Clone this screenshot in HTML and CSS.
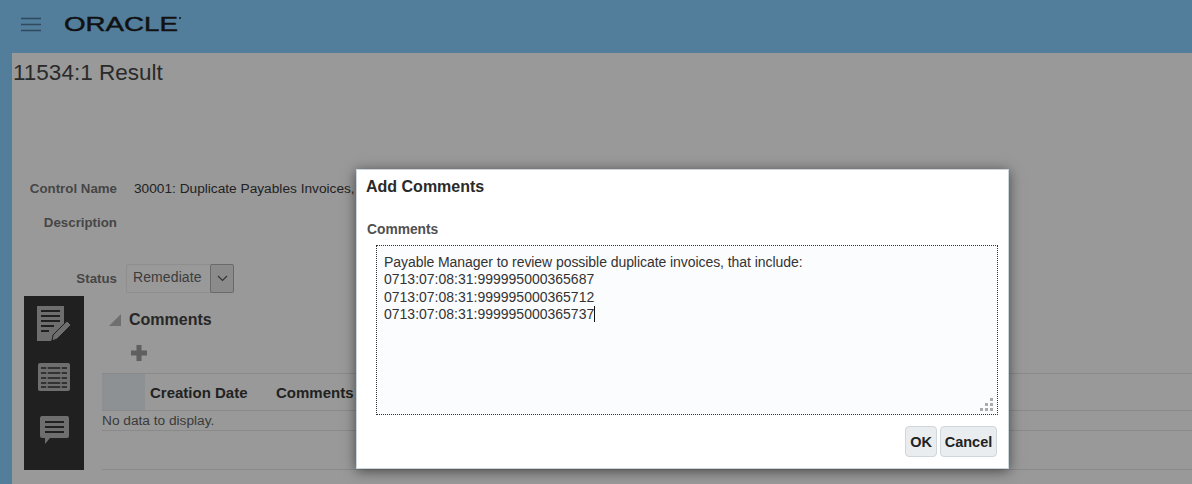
FILE: index.html
```html
<!DOCTYPE html>
<html lang="en">
<head>
<meta charset="utf-8">
<title>11534:1 Result</title>
<link rel="stylesheet" href="styles.css">
</head>
<body>
<div class="page">
  <header class="topbar">
    <svg class="burger" width="21" height="15" viewBox="0 0 21 15"><path d="M0 1.5h20M0 7.5h20M0 13.5h20" stroke="#2f4a5c" stroke-width="1.6" fill="none"/></svg>
    <svg class="logo" width="122" height="22" viewBox="0 0 122 22"><text x="0" y="18" textLength="114" lengthAdjust="spacingAndGlyphs" class="logo-text">ORACLE</text><circle cx="116" cy="5" r="1" fill="#111"/></svg>
  </header>
  <main class="content">
    <h1 class="title">11534:1 Result</h1>
    <div class="form">
      <div class="label">Control Name</div><div class="value">30001: Duplicate Payables Invoices,</div>
      <div class="label">Description</div><div class="value"></div>
      <div class="label status-label">Status</div>
      <div class="select"><span class="select-text">Remediate</span><span class="select-btn"><svg width="11" height="7" viewBox="0 0 11 7"><path d="M1 1l4.500 4.500L10 1" stroke="#333" stroke-width="1.200" fill="none"/></svg></span></div>
    </div>
    <section class="lower">
      <nav class="rail">
        <svg class="rail-note" width="36" height="36" viewBox="0 0 36 36"><path d="M1 0h27v19L17 32l-2 3H1z" fill="#6e6e6e"/><path d="M5 5h19M5 10h19M5 15h19M5 20h13M5 25h8" stroke="#202020" stroke-width="2"/><path d="M17 29l14-14 4 4-14 14-5 2z" fill="#6e6e6e" stroke="#202020"/></svg>
        <svg class="rail-table" width="32" height="28" viewBox="0 0 32 28"><rect width="32" height="28" rx="2" fill="#6e6e6e"/><path d="M3 5h26M3 10h26M3 15h26M3 20h26M3 24h26" stroke="#202020" stroke-width="1.600"/><path d="M9 3v23M23 3v23" stroke="#6e6e6e" stroke-width="1.500"/></svg>
        <svg class="rail-chat" width="29" height="28" viewBox="0 0 29 28"><path d="M2 0h25a2 2 0 0 1 2 2v18a2 2 0 0 1-2 2H10l-5 6v-6H2a2 2 0 0 1-2-2V2a2 2 0 0 1 2-2z" fill="#6e6e6e"/><path d="M5 6h19M5 11h19M5 16h19" stroke="#202020" stroke-width="2"/></svg>
      </nav>
      <div class="panel">
        <div class="panel-head"><span class="triangle"></span><h2 class="panel-title">Comments</h2></div>
        <div class="toolbar"><svg width="16" height="16" viewBox="0 0 16 16"><path d="M8 0v16M0 8h16" stroke="#5f5f5f" stroke-width="5"/></svg></div>
        <div class="thead"><div class="th-blank"></div><div class="th th-date">Creation Date</div><div class="th">Comments</div></div>
        <div class="nodata">No data to display.</div>
        <div class="tfoot"></div>
      </div>
    </section>
  </main>
</div>
<div class="dialog">
  <div class="dialog-title">Add Comments</div>
  <div class="field-label">Comments</div>
  <div class="textarea">Payable Manager to review possible duplicate invoices, that include:<br>0713:07:08:31:999995000365687<br>0713:07:08:31:999995000365712<br><span class="caret">0713:07:08:31:999995000365737</span><svg class="grip" width="14" height="14" viewBox="0 0 14 14"><path d="M10 0h3v3h-3zM5 5h3v3H5zM10 5h3v3h-3zM0 10h3v3H0zM5 10h3v3H5zM10 10h3v3h-3z" fill="#aaa"/></svg></div>
  <div class="actions"><button class="btn btn-ok">OK</button><button class="btn btn-cancel">Cancel</button></div>
</div>
</body>
</html>
```
FILE: styles.css
```css
* { box-sizing: border-box; }
html, body { margin: 0; height: 484px; overflow: hidden; }
body { font-family: "Liberation Sans", Arial, sans-serif; background: #527d9b; color: #2c2c2c; position: relative; }
.page { display: flex; flex-direction: column; height: 484px; }
.topbar { height: 53px; flex: none; display: flex; align-items: center; padding: 0 0 5px 21px; background: #527d9b; }
.logo { margin-left: 22px; overflow: visible; }
.logo-text { font-family: "Liberation Sans", Arial, sans-serif; font-size: 21px; font-weight: 400; fill: #111; stroke: #111; stroke-width: .45px; }
.content { flex: 1; margin-left: 12px; background: #999; display: flex; flex-direction: column; min-height: 0; }
.title { margin: 0; padding: 7px 0 0 1px; font-size: 22.500px; line-height: 26px; font-weight: 400; height: 120px; color: #2a2a2a; }
.form { display: grid; grid-template-columns: 105px auto; column-gap: 17px; grid-template-rows: 34px 48px 38px; justify-content: start; align-items: start; height: 123px; }
.label { font-size: 13.300px; font-weight: 700; color: #464646; text-align: right; line-height: 32px; }
.value { font-size: 13.700px; color: #222; line-height: 32px; }
.status-label { margin-top: 8px; }
.select { display: flex; width: 108px; height: 29px; margin: 9px 0 0 -8px; border: 1px solid #8e8e8e; border-radius: 2px; font-size: 14px; color: #3c3c3c; }
.select-text { flex: 1; padding-left: 6px; line-height: 25px; letter-spacing: .1px; }
.select-btn { width: 24px; margin: -1px; display: flex; align-items: center; justify-content: center; background: #8b8b8b; border: 1px solid #6a6a6a; border-radius: 2px; }
.lower { display: flex; flex: 1; min-height: 0; padding-left: 12px; }
.rail { width: 60px; height: 174px; flex: none; background: #202020; display: flex; flex-direction: column; align-items: center; padding: 10px 0 0; }
.rail-table { margin-top: 21px; }
.rail-chat { margin-top: 25px; }
.panel { flex: 1; margin-left: 18px; min-width: 0; }
.panel-head { display: flex; align-items: center; height: 20px; margin-top: 14px; padding-left: 7px; }
.triangle { width: 0; height: 0; border-style: solid; border-width: 0 0 12px 12px; border-color: transparent transparent #6f6f6f transparent; }
.panel-title { margin: 0 0 0 8px; font-size: 16px; font-weight: 700; color: #272727; }
.toolbar { height: 43px; padding: 15px 0 0 29px; }
.thead { display: flex; height: 38px; border-top: 1px solid #8a8a8a; border-bottom: 1px solid #8a8a8a; align-items: center; }
.th-blank { width: 43px; height: 100%; background: #8e9194; margin-right: 5px; }
.th { font-size: 15px; font-weight: 700; color: #222; }
.th-date { width: 126px; }
.nodata { height: 20px; border-bottom: 1px solid #8a8a8a; font-size: 13.700px; line-height: 19px; color: #3a3a3a; }
.tfoot { height: 39px; border-bottom: 1px solid #8a8a8a; }
.dialog { position: absolute; left: 356px; top: 169px; width: 653px; height: 300px; background: #fff; border: 1px solid #cbd5dc; box-shadow: 0 2px 12px rgba(0,0,0,.55); padding: 8px 10px 0 9px; display: flex; flex-direction: column; }
.dialog-title { font-size: 16px; font-weight: 700; color: #2a2a2a; line-height: 18px; }
.field-label { margin: 25px 0 0 1px; font-size: 13.800px; font-weight: 700; color: #505050; line-height: 18px; }
.textarea { position: relative; margin: 6px 0 0 10px; height: 170px; border: 1px dotted #333; background: #fbfcfe; padding: 8px 7px; font-size: 14px; line-height: 17.400px; color: #333; }
.textarea::first-line { letter-spacing: -.06px; }
.caret { border-right: 1px solid #111; }
.grip { position: absolute; right: 3px; bottom: 2px; }
.actions { display: flex; justify-content: flex-end; gap: 3px; margin-top: 11px; padding-right: 1px; }
.btn { height: 31px; padding: 0; border: 1px solid #cfd6dc; border-radius: 4px; background: #e9edf0; font-family: inherit; font-size: 14.500px; font-weight: 700; color: #222; }
.btn-ok { width: 32px; }
.btn-cancel { width: 57px; }
```
